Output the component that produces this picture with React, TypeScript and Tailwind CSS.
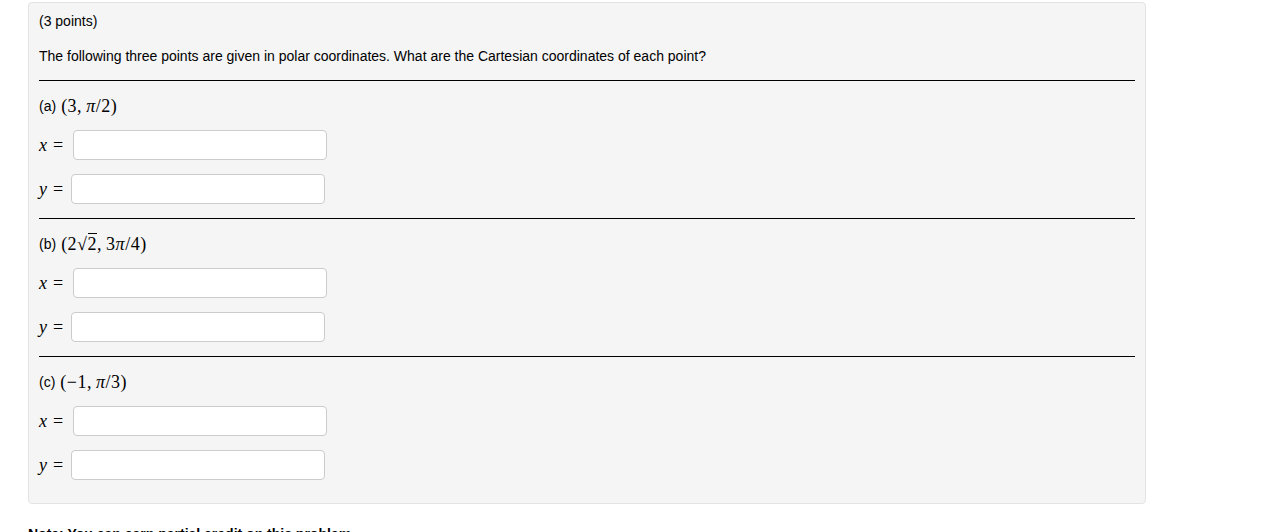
import React from "react";

const sans = { fontFamily: '"Liberation Sans", Arial, sans-serif' };
const serif = { fontFamily: '"Liberation Serif", "DejaVu Serif", serif' };

function MathVar({ v }: { v: string }) {
  return (
    <span className="text-[18px] leading-[20px] text-black" style={serif}>
      <span className="italic">{v}</span>
      <span className="ml-[6px]">=</span>
    </span>
  );
}

function Field({ v }: { v: string }) {
  return (
    <div className="flex h-[30px] items-center">
      <MathVar v={v} />
      <div
        className={
          v === "x"
            ? "ml-[10px] h-[30px] w-[254px] rounded-[4px] border border-[#cccccc] bg-white"
            : "ml-[8px] h-[30px] w-[254px] rounded-[4px] border border-[#cccccc] bg-white"
        }
      />
    </div>
  );
}

function Part({ label, math, last }: { label: string; math: React.ReactNode; last?: boolean }) {
  return (
    <div>
      <div className="mt-[14px] flex h-[22px] items-center text-[14px] text-black">
        <span>{label}</span>
        <span className="ml-[5px] text-[18px] tracking-[0.5px]" style={serif}>
          {math}
        </span>
      </div>
      <div className="mt-[13px]">
        <Field v="x" />
      </div>
      <div className="mt-[14px]">
        <Field v="y" />
      </div>
      {!last && <div className="mt-[14px] h-px bg-black" />}
    </div>
  );
}

export default function App() {
  return (
    <div className="min-h-[532px] w-[1267px] bg-white pt-[2px] pl-[28px]" style={sans}>
      <div className="w-[1118px] rounded-[4px] border border-[#e3e3e3] bg-[#f5f5f5] pl-[10px] pr-[10px] pt-[8px] pb-[23px]">
        <div className="h-[20px] text-[14px] leading-[20px] text-black">(3 points)</div>
        <div className="mt-[15px] h-[20px] text-[14px] leading-[20px] text-black">
          The following three points are given in polar coordinates. What are the Cartesian coordinates of each point?
        </div>
        <div className="mt-[14px] h-px bg-black" />
        <Part
          label="(a)"
          math={
            <>
              (3,&#8201;<span className="italic">π</span>/2)
            </>
          }
        />
        <Part
          label="(b)"
          math={
            <>
              (2√<span className="border-t border-black">2</span>,&#8201;3<span className="italic">π</span>/4)
            </>
          }
        />
        <Part
          label="(c)"
          last
          math={
            <>
              (−1,&#8201;<span className="italic">π</span>/3)
            </>
          }
        />
      </div>
      <div className="mt-[20px] h-[20px] text-[14px] font-bold leading-[20px] text-black">
        Note: You can earn partial credit on this problem.
      </div>
    </div>
  );
}
